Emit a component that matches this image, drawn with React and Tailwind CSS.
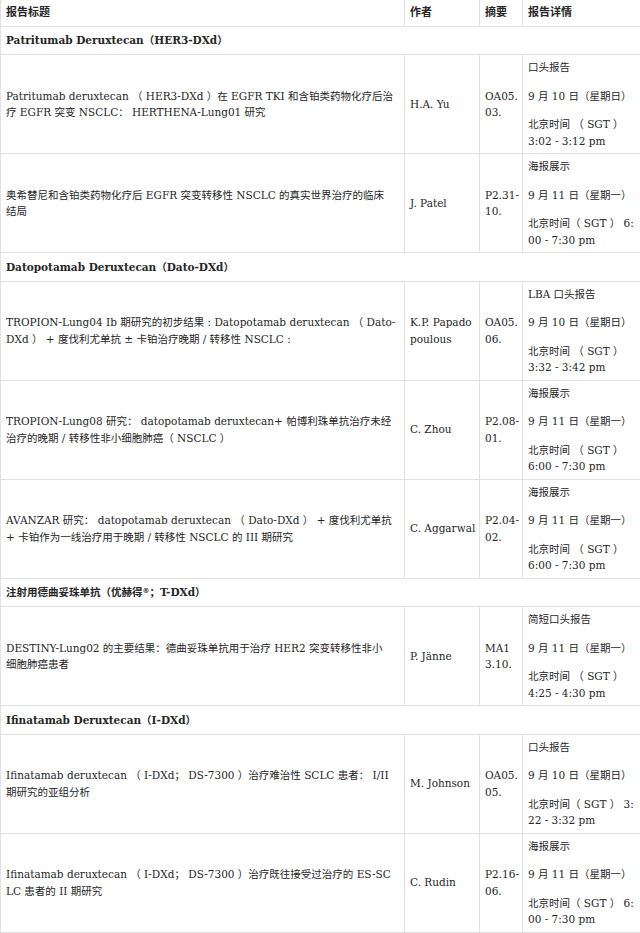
import React from "react";

const rows = [
  { section: "Patritumab Deruxtecan（HER3-DXd）" },
  {
    title: [
      "Patritumab deruxtecan （ HER3-DXd ）在 EGFR TKI 和含铂类药物化疗后治",
      "疗 EGFR 突变 NSCLC： HERTHENA-Lung01 研究",
    ],
    author: ["H.A. Yu"],
    abs: ["OA05.", "03."],
    type: "口头报告",
    date: "9 月 10 日（星期日）",
    time: ["北京时间 （ SGT ）", "3:02 - 3:12 pm"],
  },
  {
    title: [
      "奥希替尼和含铂类药物化疗后 EGFR 突变转移性 NSCLC 的真实世界治疗的临床",
      "结局",
    ],
    author: ["J. Patel"],
    abs: ["P2.31-", "10."],
    type: "海报展示",
    date: "9 月 11 日（星期一）",
    time: ["北京时间（ SGT ） 6:", "00 - 7:30 pm"],
  },
  { section: "Datopotamab Deruxtecan（Dato-DXd）" },
  {
    title: [
      "TROPION-Lung04 Ib 期研究的初步结果 : Datopotamab deruxtecan （ Dato-",
      "DXd ） + 度伐利尤单抗 ± 卡铂治疗晚期 / 转移性 NSCLC :",
    ],
    author: ["K.P. Papado", "poulous"],
    abs: ["OA05.", "06."],
    type: "LBA 口头报告",
    date: "9 月 10 日（星期日）",
    time: ["北京时间 （ SGT ）", "3:32 - 3:42 pm"],
  },
  {
    title: [
      "TROPION-Lung08 研究： datopotamab deruxtecan+ 帕博利珠单抗治疗未经",
      "治疗的晚期 / 转移性非小细胞肺癌（ NSCLC ）",
    ],
    author: ["C. Zhou"],
    abs: ["P2.08-", "01."],
    type: "海报展示",
    date: "9 月 11 日（星期一）",
    time: ["北京时间 （ SGT ）", "6:00 - 7:30 pm"],
  },
  {
    title: [
      "AVANZAR 研究： datopotamab deruxtecan （ Dato-DXd ） + 度伐利尤单抗",
      "+ 卡铂作为一线治疗用于晚期 / 转移性 NSCLC 的 III 期研究",
    ],
    author: ["C. Aggarwal"],
    abs: ["P2.04-", "02."],
    type: "海报展示",
    date: "9 月 11 日（星期一）",
    time: ["北京时间 （ SGT ）", "6:00 - 7:30 pm"],
  },
  { section: "tdxd" },
  {
    title: [
      "DESTINY-Lung02 的主要结果：德曲妥珠单抗用于治疗 HER2 突变转移性非小",
      "细胞肺癌患者",
    ],
    author: ["P. Jänne"],
    abs: ["MA1", "3.10."],
    type: "简短口头报告",
    date: "9 月 11 日（星期一）",
    time: ["北京时间 （ SGT ）", "4:25 - 4:30 pm"],
  },
  { section: "Ifinatamab Deruxtecan（I-DXd）" },
  {
    title: [
      "Ifinatamab deruxtecan （ I-DXd； DS-7300 ）治疗难治性 SCLC 患者： I/II",
      "期研究的亚组分析",
    ],
    author: ["M. Johnson"],
    abs: ["OA05.", "05."],
    type: "口头报告",
    date: "9 月 10 日（星期日）",
    time: ["北京时间（ SGT ） 3:", "22 - 3:32 pm"],
  },
  {
    title: [
      "Ifinatamab deruxtecan （ I-DXd； DS-7300 ）治疗既往接受过治疗的 ES-SC",
      "LC 患者的 II 期研究",
    ],
    author: ["C. Rudin"],
    abs: ["P2.16-", "06."],
    type: "海报展示",
    date: "9 月 11 日（星期一）",
    time: ["北京时间（ SGT ） 6:", "00 - 7:30 pm"],
  },
];

function Lines({ items }) {
  return (
    <>
      {items.map((l, i) => (
        <div key={i} className="whitespace-nowrap">
          {l}
        </div>
      ))}
    </>
  );
}

const cell = "border border-[#e2e2e2] px-[5px] align-middle";

export default function App() {
  return (
    <div className="w-[640px] bg-white text-[#262626] text-[10.5px] leading-[16.5px] font-['DejaVu_Serif','Noto_Sans_CJK_SC',serif]">
      <table className="w-[640px] table-fixed border-collapse">
        <colgroup>
          <col className="w-[404px]" />
          <col className="w-[75px]" />
          <col className="w-[43px]" />
          <col className="w-[118px]" />
        </colgroup>
        <thead>
          <tr>
            <th className={`${cell} border-t-0 py-[4.5px] text-left text-[11px] font-bold`}>报告标题</th>
            <th className={`${cell} border-t-0 py-[4.5px] text-left text-[11px] font-bold`}>作者</th>
            <th className={`${cell} border-t-0 py-[4.5px] text-left text-[11px] font-bold`}>摘要</th>
            <th className={`${cell} border-t-0 py-[4.5px] text-left text-[11px] font-bold`}>报告详情</th>
          </tr>
        </thead>
        <tbody>
          {rows.map((r, i) =>
            r.section ? (
              <tr key={i}>
                <td colSpan={4} className={`${cell} py-[5.5px] font-bold`}>
                  {r.section === "tdxd" ? (
                    <span>
                      注射用德曲妥珠单抗（优赫得<sup className="text-[7px]">®</sup>；T-DXd）
                    </span>
                  ) : (
                    r.section
                  )}
                </td>
              </tr>
            ) : (
              <tr key={i}>
                <td className={`${cell} py-[4px]`}>
                  <Lines items={r.title} />
                </td>
                <td className={`${cell} py-[4px]`}>
                  <Lines items={r.author} />
                </td>
                <td className={`${cell} py-[4px]`}>
                  <Lines items={r.abs} />
                </td>
                <td className={`${cell} py-[4px]`}>
                  <div className="flex flex-col gap-[12px]">
                    <div className="whitespace-nowrap">{r.type}</div>
                    <div className="whitespace-nowrap">{r.date}</div>
                    <div>
                      <Lines items={r.time} />
                    </div>
                  </div>
                </td>
              </tr>
            )
          )}
        </tbody>
      </table>
    </div>
  );
}
